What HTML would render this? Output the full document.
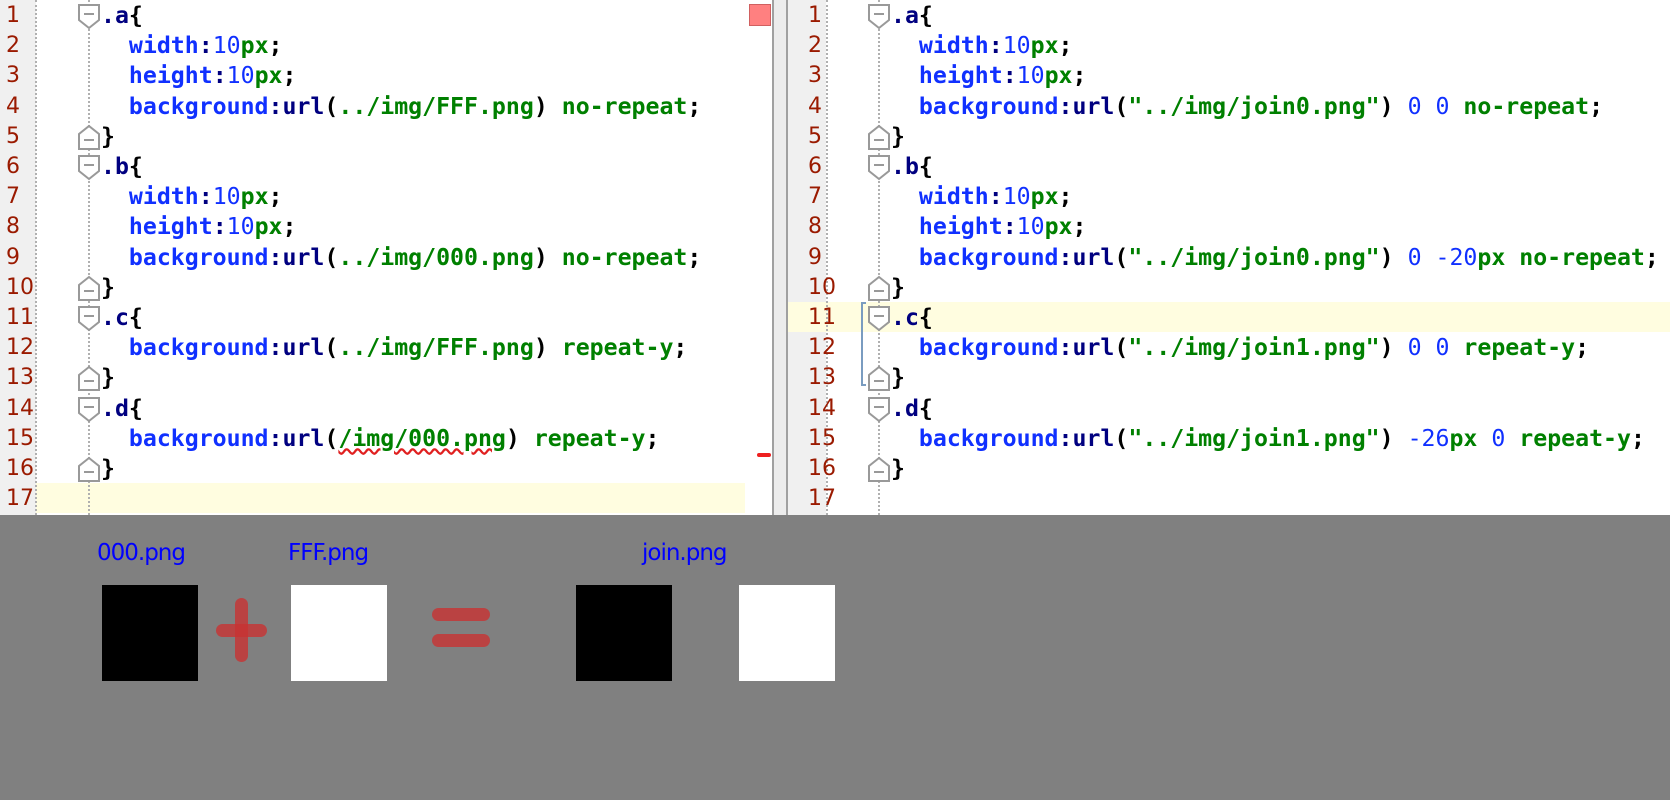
<!DOCTYPE html>
<html><head><meta charset="utf-8"><style>
*{margin:0;padding:0;box-sizing:border-box}
body{width:1670px;height:800px;overflow:hidden;background:#fff;position:relative;font-family:"DejaVu Sans Mono","Liberation Mono",monospace}
.abs{position:absolute}
.ln{position:absolute;height:30.2px;line-height:32px;font-family:"DejaVu Sans","Liberation Sans",sans-serif;font-size:22px;color:#9a1a00}
.cd{position:absolute;height:30.2px;line-height:32px;font-size:23.2px;font-weight:bold;white-space:pre;color:#000}
.p{color:#1030ff}.n{color:#000080}.s{color:#008000}.g{color:#008000}.num{color:#1030ff;font-weight:normal}
.dot{position:absolute;width:0;border-left:2px dotted #b0b0b0}
.lbl{position:absolute;font-family:"DejaVu Sans","Liberation Sans",sans-serif;font-size:23px;color:#0000ff;letter-spacing:-1px}
.sq{position:absolute;width:96px;height:96px}
.bar{position:absolute;background:rgba(200,50,50,0.8);border-radius:7px}
</style></head><body>
<div class="abs" style="left:0;top:0;width:36px;height:515px;background:#f0f0f0"></div>
<div class="abs" style="left:36px;top:483px;width:709px;height:30px;background:#fffde0"></div>
<div class="dot" style="left:35px;top:0;height:515px"></div>
<div class="dot" style="left:88px;top:0;height:515px"></div>
<div class="abs" style="left:749px;top:4px;width:22px;height:22px;background:#ff8080;border:1px solid #d06060"></div>
<div class="abs" style="left:757px;top:453px;width:14px;height:4px;background:#ee2020;border-radius:2px"></div>
<div class="abs" style="left:772px;top:0;width:16px;height:515px;background:#ececec;border-left:2px solid #a0a0a0;border-right:2px solid #a0a0a0"></div>
<div class="abs" style="left:788px;top:0;width:38px;height:515px;background:#f0f0f0"></div>
<div class="abs" style="left:788px;top:302px;width:882px;height:30px;background:#fffde0"></div>
<div class="dot" style="left:826px;top:0;height:515px"></div>
<div class="dot" style="left:878px;top:0;height:515px"></div>
<div class="abs" style="left:861px;top:302px;height:84px;border:2px solid #7a9cc0;border-right:none;width:5px"></div>
<div id="L"></div>
<div class="abs" style="left:0;top:515px;width:1670px;height:285px;background:#808080"></div>
<div class="lbl" style="left:97px;top:540px">000.png</div>
<div class="lbl" style="left:288px;top:540px">FFF.png</div>
<div class="lbl" style="left:642px;top:540px">join.png</div>
<div class="sq" style="left:102px;top:585px;background:#000"></div>
<div class="sq" style="left:291px;top:585px;background:#fff"></div>
<div class="sq" style="left:576px;top:585px;background:#000"></div>
<div class="sq" style="left:739px;top:585px;background:#fff"></div>
<div class="bar" style="left:235px;top:598px;width:13px;height:64px"></div>
<div class="bar" style="left:216px;top:624px;width:51px;height:13px"></div>
<div class="bar" style="left:432px;top:608px;width:58px;height:13px"></div>
<div class="bar" style="left:432px;top:634px;width:58px;height:13px"></div>
<script>
var H=30.2;
var open='<svg width="24" height="28" viewBox="0 0 24 28"><path d="M2 3H22V18L12 26L2 18Z" fill="#fff" stroke="#999" stroke-width="2"/><path d="M7 12H17" stroke="#999" stroke-width="2"/></svg>';
var close='<svg width="24" height="28" viewBox="0 0 24 28"><path d="M2 26H22V11L12 3L2 11Z" fill="#fff" stroke="#999" stroke-width="2"/><path d="M7 17H17" stroke="#999" stroke-width="2"/></svg>';
function P(p){return '<span class="p">'+p+'</span><span class="n">:</span>'}
function U(u){return '<span class="n">url</span>(<span class="s">'+u+'</span>)'}
var left=[
['o','<span class="n">.a</span>{'],
['','  '+P('width')+'<span class="num">10</span><span class="g">px</span>;'],
['','  '+P('height')+'<span class="num">10</span><span class="g">px</span>;'],
['','  '+P('background')+U('../img/FFF.png')+' <span class="g">no-repeat</span>;'],
['c','}'],
['o','<span class="n">.b</span>{'],
['','  '+P('width')+'<span class="num">10</span><span class="g">px</span>;'],
['','  '+P('height')+'<span class="num">10</span><span class="g">px</span>;'],
['','  '+P('background')+U('../img/000.png')+' <span class="g">no-repeat</span>;'],
['c','}'],
['o','<span class="n">.c</span>{'],
['','  '+P('background')+U('../img/FFF.png')+' <span class="g">repeat-y</span>;'],
['c','}'],
['o','<span class="n">.d</span>{'],
['','  '+P('background')+'<span class="n">url</span>(<span class="s" style="text-decoration:underline wavy #e02020">/img/000.png</span>) <span class="g">repeat-y</span>;'],
['c','}'],
['','']];
var right=[
['o','<span class="n">.a</span>{'],
['','  '+P('width')+'<span class="num">10</span><span class="g">px</span>;'],
['','  '+P('height')+'<span class="num">10</span><span class="g">px</span>;'],
['','  '+P('background')+U('"../img/join0.png"')+' <span class="num">0 0</span> <span class="g">no-repeat</span>;'],
['c','}'],
['o','<span class="n">.b</span>{'],
['','  '+P('width')+'<span class="num">10</span><span class="g">px</span>;'],
['','  '+P('height')+'<span class="num">10</span><span class="g">px</span>;'],
['','  '+P('background')+U('"../img/join0.png"')+' <span class="num">0 -20</span><span class="g">px no-repeat</span>;'],
['c','}'],
['o','<span class="n">.c</span>{'],
['','  '+P('background')+U('"../img/join1.png"')+' <span class="num">0 0</span> <span class="g">repeat-y</span>;'],
['c','}'],
['o','<span class="n">.d</span>{'],
['','  '+P('background')+U('"../img/join1.png"')+' <span class="num">-26</span><span class="g">px</span> <span class="num">0</span> <span class="g">repeat-y</span>;'],
['c','}'],
['','']];
var h='';
function panel(arr,nx,fx,cx){
 arr.forEach(function(l,i){
  var t=i*H;
  h+='<div class="ln" style="left:'+nx+'px;top:'+t+'px">'+(i+1)+'</div>';
  if(l[0])h+='<div class="abs" style="left:'+fx+'px;top:'+(t+2)+'px">'+(l[0]=='o'?open:close)+'</div>';
  h+='<div class="cd" style="left:'+cx+'px;top:'+t+'px">'+l[1]+'</div>';
 });
}
panel(left,6,77,101);
panel(right,808,867,891);
document.getElementById('L').innerHTML=h;
</script>
</body></html>
